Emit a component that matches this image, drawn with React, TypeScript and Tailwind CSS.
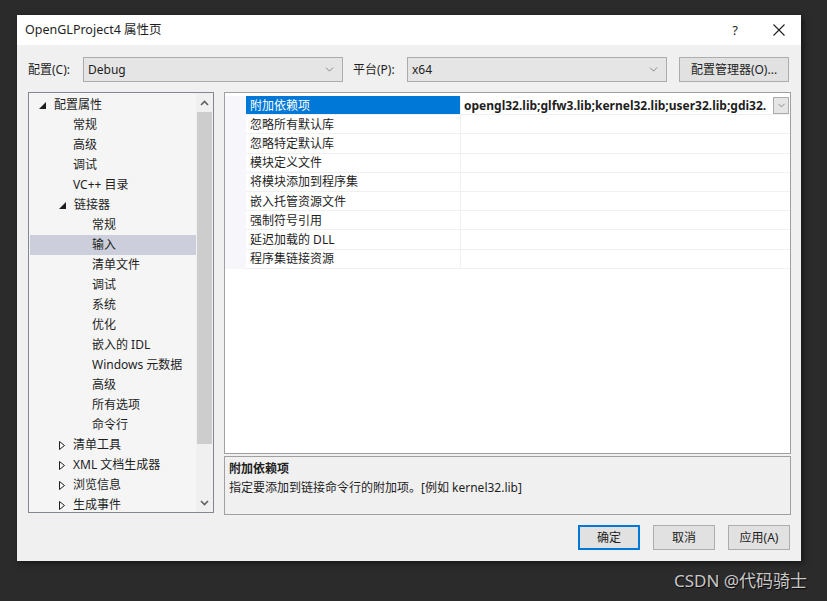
import { ChevronDown } from "lucide-react";

const uiFont = "font-['Noto_Sans','Noto_Sans_CJK_SC',sans-serif]";

type TreeItem = { label: string; level: 0 | 1 | 2; toggle?: "open" | "closed"; selected?: boolean };

const treeItems: TreeItem[] = [
  { label: "配置属性", level: 0, toggle: "open" },
  { label: "常规", level: 1 },
  { label: "高级", level: 1 },
  { label: "调试", level: 1 },
  { label: "VC++ 目录", level: 1 },
  { label: "链接器", level: 1, toggle: "open" },
  { label: "常规", level: 2 },
  { label: "输入", level: 2, selected: true },
  { label: "清单文件", level: 2 },
  { label: "调试", level: 2 },
  { label: "系统", level: 2 },
  { label: "优化", level: 2 },
  { label: "嵌入的 IDL", level: 2 },
  { label: "Windows 元数据", level: 2 },
  { label: "高级", level: 2 },
  { label: "所有选项", level: 2 },
  { label: "命令行", level: 2 },
  { label: "清单工具", level: 1, toggle: "closed" },
  { label: "XML 文档生成器", level: 1, toggle: "closed" },
  { label: "浏览信息", level: 1, toggle: "closed" },
  { label: "生成事件", level: 1, toggle: "closed" },
];

const properties = [
  "附加依赖项",
  "忽略所有默认库",
  "忽略特定默认库",
  "模块定义文件",
  "将模块添加到程序集",
  "嵌入托管资源文件",
  "强制符号引用",
  "延迟加载的 DLL",
  "程序集链接资源",
];

const indent = ["pl-[9px]", "pl-[29px]", "pl-[62px]"];

function Toggle({ kind }: { kind: "open" | "closed" }) {
  if (kind === "open") {
    return (
      <svg width="7" height="7" viewBox="0 0 7 7" className="mr-[8px] shrink-0">
        <path d="M7 0 L7 7 L0 7 Z" fill="#1e1e1e" />
      </svg>
    );
  }
  return (
    <svg width="6" height="9" viewBox="0 0 6 9" className="mr-[8px] shrink-0">
      <path d="M0.5 0.5 L5.5 4.5 L0.5 8.5 Z" fill="none" stroke="#1e1e1e" strokeWidth="1" />
    </svg>
  );
}

function Combo({ value, width }: { value: string; width: string }) {
  return (
    <div
      className={`${width} h-[25px] flex items-center justify-between border border-[#acacac] bg-[#e5e5e5] pl-[4px] pr-[6px]`}
    >
      <span>{value}</span>
      <ChevronDown size={13} strokeWidth={1.2} className="text-[#555]" />
    </div>
  );
}

function Button({ label, primary }: { label: string; primary?: boolean }) {
  return (
    <div
      className={`w-[62px] h-[25px] flex items-center justify-center bg-[#e1e1e1] ${
        primary ? "border-2 border-[#0078d7]" : "border border-[#adadad]"
      }`}
    >
      {label}
    </div>
  );
}

function TreePanel() {
  return (
    <div className="w-[186px] h-[421px] flex border border-[#828790] bg-[#f5f5f5] overflow-hidden">
      <div className="flex-1 pt-[2px] overflow-hidden">
        {treeItems.map((item, i) => (
          <div
            key={i}
            className={`h-[20px] flex items-center ml-[1px] ${indent[item.level]} ${
              item.selected ? "bg-[#cccedb]" : ""
            } ${item.toggle ? "" : item.level === 1 ? "pl-[43px]" : ""}`}
          >
            {item.toggle && <Toggle kind={item.toggle} />}
            <span className="whitespace-nowrap">{item.label}</span>
          </div>
        ))}
      </div>
      <div className="w-[17px] flex flex-col bg-[#f0f0f0]">
        <div className="h-[19px] flex items-center justify-center">
          <svg width="9" height="6" viewBox="0 0 9 6">
            <path d="M1 5 L4.5 1.5 L8 5" fill="none" stroke="#606060" strokeWidth="1.6" />
          </svg>
        </div>
        <div className="mx-[1px] h-[332px] bg-[#cdcdcd]" />
        <div className="flex-1 flex items-end justify-center pb-[6px]">
          <svg width="9" height="6" viewBox="0 0 9 6">
            <path d="M1 1 L4.5 4.5 L8 1" fill="none" stroke="#606060" strokeWidth="1.6" />
          </svg>
        </div>
      </div>
    </div>
  );
}

function PropertyGrid() {
  return (
    <div className="h-[362px] border border-[#a0a0a0] bg-white pt-[3px]">
      {properties.map((name, i) => {
        const active = i === 0;
        return (
          <div key={name} className="flex h-[19.2px]">
            <div className="w-[21px] shrink-0 bg-[#f7f7fb]" />
            <div
              className={`w-[214px] shrink-0 flex items-center pl-[4px] pt-[1px] border-b border-[#f0f0f0] ${
                active ? "bg-[#0078d7] text-white" : ""
              }`}
            >
              {name}
            </div>
            <div className="flex-1 min-w-0 flex items-center border-l border-b border-[#f0f0f0] pl-[3px]">
              {active && (
                <>
                  <span className="flex-1 min-w-0 whitespace-nowrap overflow-hidden font-bold pt-[1px]">
                    opengl32.lib;glfw3.lib;kernel32.lib;user32.lib;gdi32.
                  </span>
                  <div className="w-[16px] h-[17px] mr-[1px] flex items-center justify-center border border-[#acacac] bg-[#e5e5e5]">
                    <ChevronDown size={11} strokeWidth={1.3} className="text-[#555]" />
                  </div>
                </>
              )}
            </div>
          </div>
        );
      })}
    </div>
  );
}

export default function App() {
  return (
    <div className={`w-[827px] h-[601px] bg-[#2b2b2b] pt-[15px] pl-[17px] relative text-[12px] leading-[16px] text-[#1e1e1e] ${uiFont}`}>
      <div className="w-[784px] h-[546px] flex flex-col bg-[#f0f0f0] shadow-[2px_2px_6px_rgba(0,0,0,0.5)]">
        {/* title bar */}
        <div className="h-[30px] flex items-center bg-white pl-[8px] pr-[16px]">
          <span className="flex-1 text-[12.5px]">OpenGLProject4 属性页</span>
          <span className="w-[20px] text-center mr-[28px] text-[13px]">?</span>
          <svg width="12" height="12" viewBox="0 0 12 12">
            <path d="M0.5 0.5 L11.5 11.5 M11.5 0.5 L0.5 11.5" stroke="#1e1e1e" strokeWidth="1.1" />
          </svg>
        </div>

        {/* configuration / platform row */}
        <div className="flex items-center mt-[12px] pl-[11px]">
          <span className="w-[55px]">配置(C):</span>
          <Combo value="Debug" width="w-[260px]" />
          <span className="ml-[10px] w-[54px]">平台(P):</span>
          <Combo value="x64" width="w-[260px]" />
          <div className="ml-[12px] w-[110px] h-[25px] flex items-center justify-center border border-[#adadad] bg-[#e1e1e1]">
            配置管理器(O)...
          </div>
        </div>

        {/* tree + grid */}
        <div className="flex mt-[10px] pl-[11px] gap-[10px]">
          <TreePanel />
          <div className="w-[567px] flex flex-col gap-[2px]">
            <PropertyGrid />
            <div className="h-[59px] border border-[#a0a0a0] bg-[#f0f0f0] px-[4px] pt-[2px]">
              <div className="font-bold leading-[19px]">附加依赖项</div>
              <div className="leading-[19px]">指定要添加到链接命令行的附加项。[例如 kernel32.lib]</div>
            </div>
          </div>
        </div>

        {/* dialog buttons */}
        <div className="flex justify-end gap-[13px] mt-[10px] pr-[11px]">
          <Button label="确定" primary />
          <Button label="取消" />
          <Button label="应用(A)" />
        </div>
      </div>

      <div className="absolute left-[674px] top-[570px] text-[17px] leading-[22px] text-[#c8c8c8] [text-shadow:1px_1px_1px_rgba(0,0,0,0.8)]">
        CSDN @代码骑士
      </div>
    </div>
  );
}
